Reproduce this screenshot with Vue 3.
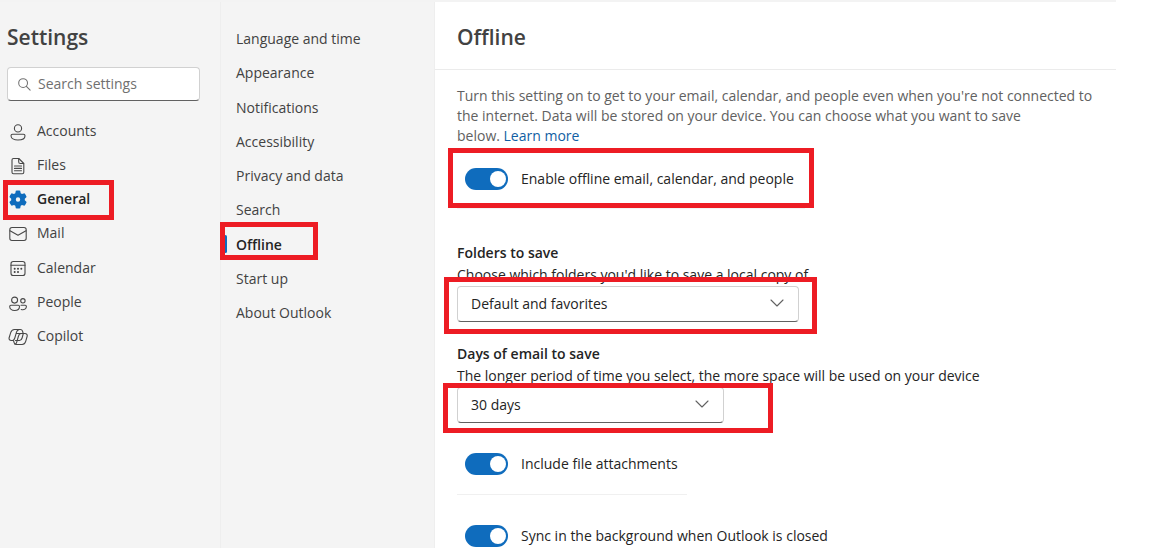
<script setup>
import { ref } from 'vue'

const categories = ['Accounts', 'Files', 'General', 'Mail', 'Calendar', 'People', 'Copilot']
const pages = [
  'Language and time', 'Appearance', 'Notifications', 'Accessibility', 'Privacy and data',
  'Search', 'Offline', 'Start up', 'About Outlook',
]

const query = ref('')
const category = ref('General')
const page = ref('Offline')
const offline = ref(true)
const attachments = ref(true)
const background = ref(true)
const folders = ref('Default and favorites')
const days = ref('30 days')
</script>

<template>
  <div class="settings">
    <aside class="primary">
      <h1>Settings</h1>
      <label class="search">
        <svg viewBox="0 0 16 16" aria-hidden="true"><circle cx="6.5" cy="6.5" r="4.7" /><path d="M10 10l4 4" /></svg>
        <input v-model="query" type="text" placeholder="Search settings" aria-label="Search settings">
      </label>
      <nav class="categories" aria-label="Categories">
        <button
          v-for="name in categories"
          :key="name"
          type="button"
          class="category"
          :class="{ active: name === category }"
          @click="category = name"
        >
          <svg v-if="name === 'Accounts'" viewBox="0 0 20 20" aria-hidden="true">
            <circle cx="10" cy="7.4" r="3.6" />
            <path d="M4.6 13.2h10.8c.9 0 1.6.6 1.600 1.500 0 2.700-3 4.300-7 4.300s-7-1.600-7-4.300c0-.9.7-1.500 1.600-1.500z" />
          </svg>
          <svg v-else-if="name === 'Files'" viewBox="0 0 20 20" aria-hidden="true">
            <path d="M5.500 3.500h5.300l5 5v8.700c0 .8-.6 1.500-1.500 1.500H5.500c-.8 0-1.500-.7-1.500-1.500V5c0-.8.7-1.500 1.500-1.500z" />
            <path d="M10.700 3.700V7c0 .9.6 1.500 1.500 1.500h3.400M6.500 11h7M6.500 13.400h7M6.500 15.800h7" />
          </svg>
          <svg v-else-if="name === 'General'" class="gear" viewBox="0 0 20 20" aria-hidden="true">
            <path fill-rule="evenodd" d="M7.800 1.800C9.200 1.400 10.800 1.400 12.200 1.800L12.700 4.200L14 5L16.400 4.300C17.400 5.300 18.200 6.700 18.600 8.100L16.800 9.700V11.300L18.600 12.900C18.200 14.300 17.400 15.700 16.400 16.700L14 16L12.700 16.800L12.200 19.200C10.800 19.600 9.200 19.600 7.800 19.200L7.300 16.800L6 16L3.600 16.700C2.600 15.700 1.800 14.300 1.400 12.900L3.200 11.300V9.700L1.400 8.100C1.800 6.700 2.600 5.300 3.600 4.300L6 5L7.300 4.200ZM10 8.300a2.200 2.200 0 1 0 0 4.400a2.200 2.200 0 1 0 0-4.400z" />
          </svg>
          <svg v-else-if="name === 'Mail'" viewBox="0 0 20 20" aria-hidden="true">
            <rect x="1.800" y="4.500" width="16.400" height="13" rx="2.200" />
            <path d="M2 7.800l8 4.400 8-4.400" />
          </svg>
          <svg v-else-if="name === 'Calendar'" viewBox="0 0 20 20" aria-hidden="true">
            <rect x="3" y="3.500" width="14" height="14" rx="2.300" />
            <path d="M3 7.200h14" />
            <g class="dots">
              <circle cx="6.700" cy="10.800" r="1" /><circle cx="10" cy="10.800" r="1" /><circle cx="13.300" cy="10.800" r="1" />
              <circle cx="6.700" cy="14" r="1" /><circle cx="10" cy="14" r="1" />
            </g>
          </svg>
          <svg v-else-if="name === 'People'" viewBox="0 0 20 20" aria-hidden="true">
            <circle cx="6.600" cy="8.100" r="3" />
            <circle cx="14.900" cy="8.800" r="2.200" />
            <path d="M2.900 13.300h7.400c.7 0 1.200.5 1.200 1.200 0 2.500-2 4-4.900 4s-4.900-1.500-4.900-4c0-.7.5-1.200 1.200-1.200zM13 13.300h4.200c.7 0 1.200.5 1.200 1.200 0 2.300-2 3.700-5.200 3" />
          </svg>
          <svg v-else viewBox="0 0 20 20" aria-hidden="true">
            <path d="M6.400 3.500h6c1.200 0 1.800.7 2.200 1.800l.6 2.200h1.700c1.700 0 2.700 1.300 2.200 3l-1.400 4.800c-.6 2-1.700 3.200-3.600 3.200H8.300c-1.200 0-1.900-.7-2.200-1.800l-.6-2.200H3.300c-1.700 0-2.600-1.300-2.100-3l1.500-4.800c.6-2 1.700-3.200 3.700-3.200z" />
            <path d="M10.800 3.600c-1.300.2-1.900 1.200-2.300 2.600L6.800 12c-.4 1.600-.9 2.500-2.300 2.500M15.200 7.500h-2c-1.600 0-2.300 1-2.700 2.500L8.800 15.800c-.4 1.400-1 2.500-2 2.200M9 7.500h4M7.500 14.500h4c1.600 0 2.200-1 2.600-2.500l1.200-4.500" />
          </svg>
          <span>{{ name }}</span>
          <i v-if="name === 'General'" class="mark mark-general" />
        </button>
      </nav>
    </aside>

    <nav class="secondary" aria-label="General settings">
      <div class="pages">
        <button
          v-for="name in pages"
          :key="name"
          type="button"
          class="page"
          :class="{ active: name === page }"
          @click="page = name"
        >
          {{ name }}
          <i v-if="name === 'Offline'" class="mark mark-offline" />
        </button>
      </div>
    </nav>

    <main>
      <header><h2>Offline</h2></header>
      <div class="body">
        <p class="intro">
          Turn this setting on to get to your email, calendar, and people even when you're not connected to
          the internet. Data will be stored on your device. You can choose what you want to save
          <span>below. <a href="#">Learn more</a></span>
        </p>

        <div class="toggle first">
          <label><input v-model="offline" type="checkbox" role="switch">Enable offline email, calendar, and people</label>
          <i class="mark mark-enable" />
        </div>

        <section class="field folders">
          <h3><label for="folders">Folders to save</label></h3>
          <p>Choose which folders you'd like to save a local copy of</p>
          <div class="picker wide">
            <select id="folders" v-model="folders">
              <option>Default and favorites</option>
              <option>All folders</option>
            </select>
            <svg viewBox="0 0 16 16" aria-hidden="true"><path d="M2 5l6 6 6-6" /></svg>
            <i class="mark mark-folders" />
          </div>
        </section>

        <section class="field">
          <h3><label for="days">Days of email to save</label></h3>
          <p>The longer period of time you select, the more space will be used on your device</p>
          <div class="picker">
            <select id="days" v-model="days">
              <option>7 days</option>
              <option>30 days</option>
              <option>90 days</option>
            </select>
            <svg viewBox="0 0 16 16" aria-hidden="true"><path d="M2 5l6 6 6-6" /></svg>
            <i class="mark mark-days" />
          </div>
        </section>

        <div class="toggle short">
          <label><input v-model="attachments" type="checkbox" role="switch">Include file attachments</label>
        </div>
        <div class="toggle last">
          <label><input v-model="background" type="checkbox" role="switch">Sync in the background when Outlook is closed</label>
        </div>
      </div>
    </main>
  </div>
</template>

<style>
body {
  background: #fff;
}
</style>

<style scoped>
* {
  box-sizing: border-box;
}

.settings {
  display: grid;
  grid-template-columns: 221px 214px minmax(0, 1fr);
  min-height: calc(100vh - 11px);
  margin-right: 36px;
  border-top: 2px solid #f3f3f3;
  color: #242424;
  font: 14px/20px "Open Sans", "Noto Sans", sans-serif;
}

h1, h2, h3, p {
  margin: 0;
}

button, input, select {
  font: inherit;
  color: inherit;
}

svg {
  fill: none;
  stroke: #484848;
  stroke-width: 1.1;
  stroke-linecap: round;
  stroke-linejoin: round;
}

.primary, .secondary {
  background: #f4f4f4;
  border-right: 1px solid #eee;
}

h1, h2 {
  font-size: 21px;
  line-height: 28px;
  font-weight: 600;
  color: #424242;
}

h1 {
  padding: 21px 7px 0;
}

.search {
  display: flex;
  align-items: center;
  gap: 6px;
  height: 34px;
  margin: 16px 20px 13px 7px;
  padding: 0 9px;
  background: #fff;
  border: 1px solid #d1d1d1;
  border-bottom-color: #616161;
  border-radius: 4px;
}

.search svg {
  flex: none;
  width: 15px;
  height: 15px;
  stroke: #707070;
}

.search input {
  min-width: 0;
  flex: 1;
  padding: 0;
  border: 0;
  outline: 0;
  background: none;
}

.search input::placeholder {
  color: #707070;
  opacity: 1;
}

.categories, .pages {
  display: flex;
  flex-direction: column;
  justify-content: space-between;
}

.categories {
  min-height: 239px;
}

.pages {
  min-height: 308px;
}

.category, .page {
  position: relative;
  display: flex;
  align-items: center;
  width: 100%;
  height: 34px;
  padding: 0;
  border: 0;
  background: none;
  color: #424242;
  text-align: left;
}

.category {
  gap: 9px;
  padding-left: 8px;
}

.category svg {
  width: 20px;
  height: 20px;
}

.category .gear {
  fill: #0f6cbd;
  stroke: none;
}

.category .dots {
  fill: #424242;
  stroke: none;
}

.category.active, .page.active {
  font-weight: 600;
  color: #242424;
}

.secondary {
  padding-top: 20px;
}

.page {
  padding-left: 15px;
}

.page.active::before {
  content: "";
  position: absolute;
  left: 3px;
  top: 7px;
  width: 3px;
  height: 18px;
  border-radius: 2px;
  background: #0f6cbd;
}

.mark {
  position: absolute;
  border: 5px solid #ed1c24;
  pointer-events: none;
}

.mark-general {
  left: 3px;
  top: -2px;
  width: 111px;
  height: 40px;
}

.mark-offline {
  left: -1px;
  top: -6px;
  width: 98px;
  height: 38px;
}

header {
  padding: 21px 22px 18px;
  border-bottom: 1px solid #ebebeb;
}

.body {
  padding: 16px 11px 0 22px;
}

.intro {
  color: #616161;
}

.intro span {
  white-space: nowrap;
}

a {
  color: #115ea3;
  text-decoration: none;
}

.toggle {
  position: relative;
  padding-top: 30px;
}

.toggle label {
  display: flex;
  align-items: center;
  gap: 13px;
  height: 22px;
  padding-left: 8px;
}

.toggle input {
  appearance: none;
  flex: none;
  display: flex;
  align-items: center;
  width: 43px;
  height: 22px;
  margin: 0;
  padding: 0 2px;
  border-radius: 11px;
  background: #8a8a8a;
}

.toggle input::before {
  content: "";
  width: 16px;
  height: 16px;
  border-radius: 50%;
  background: #fff;
}

.toggle input:checked {
  justify-content: flex-end;
  background: #0f6cbd;
}

.toggle.first {
  width: 348px;
  padding: 22px 0 18px;
  border-bottom: 1px solid #f3f3f3;
}

.toggle.short {
  width: 230px;
  padding-bottom: 19px;
  border-bottom: 1px solid #f0f0f0;
}

.mark-enable {
  left: -9px;
  top: 2px;
  width: 366px;
  height: 60px;
}

.field {
  padding-top: 21px;
  line-height: 22px;
}

.field.folders {
  padding-top: 33px;
}

h3 {
  font-size: 14px;
  line-height: 22px;
  font-weight: 600;
}

.picker {
  position: relative;
  width: 267px;
  height: 36px;
}

.picker.wide {
  width: 342px;
}

.picker select {
  appearance: none;
  display: block;
  width: 100%;
  height: 100%;
  padding: 0 40px 0 13px;
  background: #fff;
  border: 1px solid #d1d1d1;
  border-bottom-color: #616161;
  border-radius: 4px;
}

.picker svg {
  position: absolute;
  right: 14px;
  top: 9px;
  width: 16px;
  height: 16px;
  stroke: #616161;
  pointer-events: none;
}

.mark-folders {
  left: -13px;
  top: -9px;
  width: 373px;
  height: 57px;
}

.mark-days {
  left: -14px;
  top: -4px;
  width: 330px;
  height: 50px;
}
</style>
